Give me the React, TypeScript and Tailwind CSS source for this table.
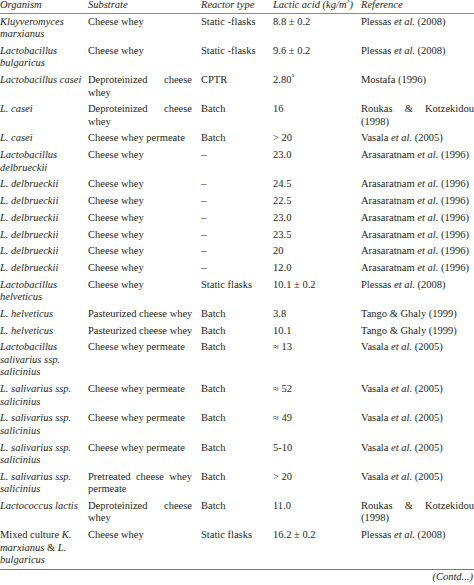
import React from "react";

type Cell = React.ReactNode;
type Row = { org: Cell; sub: Cell; reac: Cell; lac: Cell; ref: Cell };

const Lines = ({ lines }: { lines: Cell[] }) => (
  <>
    {lines.map((l, i) => (
      <div key={i} className="whitespace-nowrap">
        {l}
      </div>
    ))}
  </>
);

const Just = ({ words }: { words: string[] }) => (
  <div className="flex justify-between whitespace-nowrap">
    {words.map((w, i) => (
      <span key={i}>{w}</span>
    ))}
  </div>
);

const It = ({ children }: { children: React.ReactNode }) => <i>{children}</i>;

const plessas = (
  <>
    Plessas <It>et al.</It> (2008)
  </>
);
const vasala = (
  <>
    Vasala <It>et al.</It> (2005)
  </>
);
const arasa = (
  <>
    Arasaratnam <It>et al.</It> (1996)
  </>
);
const roukas = (
  <>
    <Just words={["Roukas", "&", "Kotzekidou"]} />
    <div>(1998)</div>
  </>
);
const deprot = (
  <>
    <Just words={["Deproteinized", "cheese"]} />
    <div>whey</div>
  </>
);

const org = (...lines: Cell[]) => (
  <Lines lines={lines.map((l) => (typeof l === "string" ? <It>{l}</It> : l))} />
);

const rows: Row[] = [
  { org: org("Kluyveromyces", "marxianus"), sub: "Cheese whey", reac: "Static -flasks", lac: "8.8 ± 0.2", ref: plessas },
  { org: org("Lactobacillus", "bulgaricus"), sub: "Cheese whey", reac: "Static -flasks", lac: "9.6 ± 0.2", ref: plessas },
  {
    org: org("Lactobacillus casei"),
    sub: deprot,
    reac: "CPTR",
    lac: (
      <>
        2.80<sup className="text-[6px] align-[3px]">a</sup>
      </>
    ),
    ref: "Mostafa (1996)",
  },
  { org: org("L. casei"), sub: deprot, reac: "Batch", lac: "16", ref: roukas },
  { org: org("L. casei"), sub: "Cheese whey permeate", reac: "Batch", lac: "> 20", ref: vasala },
  { org: org("Lactobacillus", "delbrueckii"), sub: "Cheese whey", reac: "–", lac: "23.0", ref: arasa },
  { org: org("L. delbrueckii"), sub: "Cheese whey", reac: "–", lac: "24.5", ref: arasa },
  { org: org("L. delbrueckii"), sub: "Cheese whey", reac: "–", lac: "22.5", ref: arasa },
  { org: org("L. delbrueckii"), sub: "Cheese whey", reac: "–", lac: "23.0", ref: arasa },
  { org: org("L. delbrueckii"), sub: "Cheese whey", reac: "–", lac: "23.5", ref: arasa },
  { org: org("L. delbrueckii"), sub: "Cheese whey", reac: "–", lac: "20", ref: arasa },
  { org: org("L. delbrueckii"), sub: "Cheese whey", reac: "–", lac: "12.0", ref: arasa },
  { org: org("Lactobacillus", "helveticus"), sub: "Cheese whey", reac: "Static flasks", lac: "10.1 ± 0.2", ref: plessas },
  { org: org("L. helveticus"), sub: "Pasteurized cheese whey", reac: "Batch", lac: "3.8", ref: "Tango & Ghaly (1999)" },
  { org: org("L. helveticus"), sub: "Pasteurized cheese whey", reac: "Batch", lac: "10.1", ref: "Tango & Ghaly (1999)" },
  {
    org: org("Lactobacillus", "salivarius ssp.", "salicinius"),
    sub: "Cheese whey permeate",
    reac: "Batch",
    lac: "≈ 13",
    ref: vasala,
  },
  { org: org("L. salivarius ssp.", "salicinius"), sub: "Cheese whey permeate", reac: "Batch", lac: "≈ 52", ref: vasala },
  { org: org("L. salivarius ssp.", "salicinius"), sub: "Cheese whey permeate", reac: "Batch", lac: "≈ 49", ref: vasala },
  { org: org("L. salivarius ssp.", "salicinius"), sub: "Cheese whey permeate", reac: "Batch", lac: "5-10", ref: vasala },
  {
    org: org("L. salivarius ssp.", "salicinius"),
    sub: (
      <>
        <Just words={["Pretreated", "cheese", "whey"]} />
        <div>permeate</div>
      </>
    ),
    reac: "Batch",
    lac: "> 20",
    ref: vasala,
  },
  { org: org("Lactococcus lactis"), sub: deprot, reac: "Batch", lac: "11.0", ref: roukas },
  {
    org: (
      <Lines
        lines={[
          <>
            Mixed culture <It>K.</It>
          </>,
          <>
            <It>marxianus</It> &amp; <It>L.</It>
          </>,
          <It>bulgaricus</It>,
        ]}
      />
    ),
    sub: "Cheese whey",
    reac: "Static flasks",
    lac: "16.2 ± 0.2",
    ref: plessas,
  },
];

const grid = "grid grid-cols-[88px_113px_72px_88px_113px]";

export default function App() {
  return (
    <div
      className="w-[474px] h-[585px] overflow-hidden bg-white text-[#231f20] text-[10.5px] leading-[12.5px]"
      style={{ fontFamily: '"Liberation Serif", "Times New Roman", serif' }}
    >
      <div className={`${grid} mt-[-1px] pb-[1px] border-b-[1.3px] border-[#8a8a8a] italic`}>
        <div>Organism</div>
        <div>Substrate</div>
        <div>Reactor type</div>
        <div className="whitespace-nowrap">
          Lactic acid (kg/m<sup className="text-[6px] align-[2px]">3</sup>)
        </div>
        <div>Reference</div>
      </div>
      <div className="border-b-[1.5px] border-[#7a7a7a]">
        {rows.map((r, i) => (
          <div key={i} className={`${grid} py-[2.12px]`}>
            <div className="pr-[4px]">{r.org}</div>
            <div className="pr-[9px] whitespace-nowrap">{r.sub}</div>
            <div className="whitespace-nowrap">{r.reac}</div>
            <div className="whitespace-nowrap">{r.lac}</div>
            <div className="whitespace-nowrap">{r.ref}</div>
          </div>
        ))}
      </div>
      <div className="flex justify-end mt-[1px] pr-[1px] italic">(Contd...)</div>
    </div>
  );
}
